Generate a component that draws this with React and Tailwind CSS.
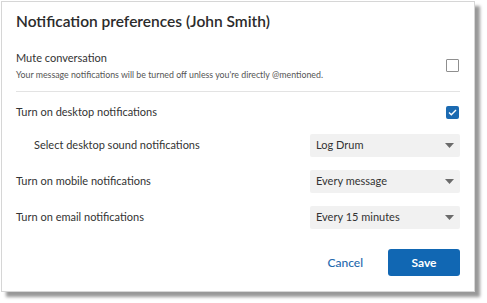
import { useState } from 'react';

const font = { fontFamily: 'Lato, "Open Sans", sans-serif' };

const Caret = () => (
    <svg width="9" height="5" viewBox="0 0 9 5" className="text-[#6b6b6b]">
        <path d="M0 0h9L4.5 5z" fill="currentColor" />
    </svg>
);

const SelectBox = ({ value }) => (
    <div className="w-[150px] h-[23px] bg-[#f1f1f1] rounded-[2px] flex items-center justify-between pl-[6px] pr-[6px] text-[11px] text-[#333]">
        <span>{value}</span>
        <Caret />
    </div>
);

const Row = ({ label, indent, value }) => (
    <div className="flex items-center justify-between h-[23px]">
        <span className={`text-[11px] text-[#333] ${indent ? 'pl-[18px]' : ''}`}>{label}</span>
        <SelectBox value={value} />
    </div>
);

export default function App() {
    const [muted, setMuted] = useState(false);
    const [desktop, setDesktop] = useState(true);

    return (
        <div className="w-[487px] h-[303px] bg-white pt-[1px] pl-[1px]" style={font}>
            <div className="w-[474px] h-[291px] bg-white border border-[#d6d6d6] shadow-[5px_5px_3px_rgba(0,0,0,0.4)] px-[14px] flex flex-col">
                {/* Header */}
                <div className="h-[40px] flex items-center">
                    <h2 className="text-[15.5px] font-semibold text-[#2b2b2b]">Notification preferences (John Smith)</h2>
                </div>

                {/* Mute */}
                <div className="flex items-center justify-between pt-[8px]">
                    <div className="flex flex-col">
                        <span className="text-[11px] leading-[16px] text-[#333]">Mute conversation</span>
                        <span className="text-[8.8px] leading-[12px] text-[#555] mt-[3px]">
                            Your message notifications will be turned off unless you're directly @mentioned.
                        </span>
                    </div>
                    <button
                        onClick={() => setMuted(!muted)}
                        className="w-[13px] h-[13px] border border-[#8f8f8f] rounded-[1px] mr-[1px] bg-white"
                    />
                </div>
                <div className="h-[1px] bg-[#e3e3e3] mt-[10px]" />

                {/* Desktop */}
                <div className="h-[40px] flex items-center justify-between">
                    <span className="text-[11px] text-[#333]">Turn on desktop notifications</span>
                    <button
                        onClick={() => setDesktop(!desktop)}
                        className="w-[13px] h-[13px] rounded-[2px] mr-[1px] bg-[#1b6ab1] flex items-center justify-center"
                    >
                        {desktop && (
                            <svg width="9" height="7" viewBox="0 0 9 7">
                                <path d="M1 3.5l2.3 2.2L8 1" stroke="white" strokeWidth="1.4" fill="none" />
                            </svg>
                        )}
                    </button>
                </div>

                <div className="flex flex-col gap-[13px] mt-[2px]">
                    <Row label="Select desktop sound notifications" indent value="Log Drum" />
                    <Row label="Turn on mobile notifications" value="Every message" />
                    <Row label="Turn on email notifications" value="Every 15 minutes" />
                </div>

                {/* Actions */}
                <div className="flex items-center justify-end mt-[20px] gap-[25px]">
                    <button className="text-[12px] font-medium text-[#2369ad]">Cancel</button>
                    <button className="w-[72px] h-[27px] rounded-[3px] bg-[#1167b3] text-white text-[12px] font-bold">
                        Save
                    </button>
                </div>
            </div>
        </div>
    );
}
